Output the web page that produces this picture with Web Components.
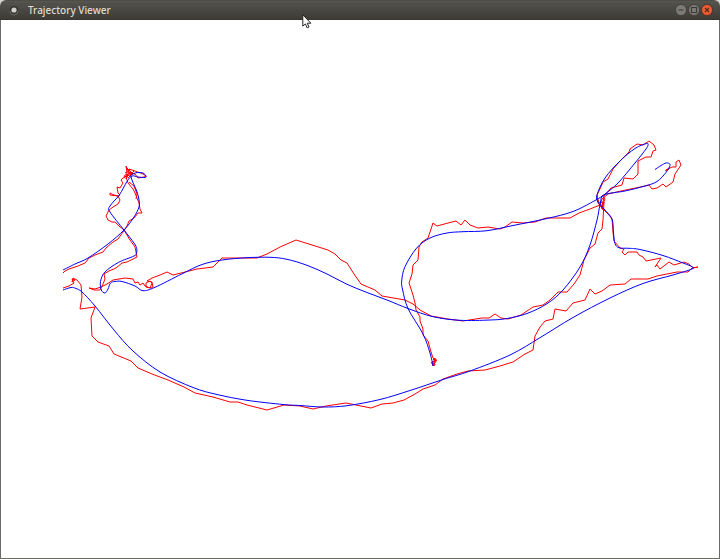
<!DOCTYPE html>
<html lang="en">
<head>
<meta charset="utf-8">
<title>Trajectory Viewer</title>
<style>
html, body { height: 100%; }
body { margin: 0; background: #d5d3d0; font-family: "Noto Sans", "Open Sans", sans-serif; overflow: hidden; }
</style>
</head>
<body>
<app-window>
  <title-bar slot="bar">Trajectory Viewer</title-bar>
  <trajectory-plot></trajectory-plot>
</app-window>
<mouse-pointer></mouse-pointer>
<script>
const define = (name, markup, setup) => customElements.define(name, class extends HTMLElement {
  constructor() {
    super();
    this.attachShadow({ mode: 'open' }).innerHTML = markup;
    if (setup) setup(this.shadowRoot);
  }
});

define('app-window', `
<style>
:host { display: flex; flex-direction: column; height: 100%; box-sizing: border-box; border-radius: 6px 6px 0 0; overflow: hidden; background: #fff; }
main { flex: 1; min-height: 0; display: flex; border: 1px solid #6b6a66; border-top: 0; }
</style>
<slot name="bar"></slot>
<main><slot></slot></main>`);

define('title-bar', `
<style>
:host { display: flex; align-items: center; height: 20px; box-sizing: border-box; padding: 0 7px 0 9px; color: #dfdbd2; background: linear-gradient(#3f3e39 0, #5b5a52 1px, #53524b 2px, #3d3c37 19px, #33322e 20px); }
svg { display: block; }
h1 { flex: 1; margin: 0 0 0 9px; font-size: 10px; line-height: 20px; font-weight: 500; }
div { display: flex; gap: 1px; }
button { width: 12px; height: 12px; padding: 0; border: 0; background: none; }
</style>
<svg width="10" height="12" viewBox="0 0 10 12"><circle cx="5" cy="6" r="4" fill="#34332f"/><path d="M1 7a4 4 0 0 0 8 0" fill="none" stroke="#68675f" stroke-width="1"/><circle cx="5" cy="6" r="2.6" fill="#d3d1cb"/></svg>
<h1><slot></slot></h1>
<div>
<button aria-label="Minimize"><svg width="12" height="12" viewBox="0 0 12 12"><circle cx="6" cy="6" r="5.5" fill="#7d7b73" stroke="#393833" stroke-width=".7"/><path d="M3.5 6h5" stroke="#3c3b37" stroke-width="1.2"/></svg></button>
<button aria-label="Maximize"><svg width="12" height="12" viewBox="0 0 12 12"><circle cx="6" cy="6" r="5.5" fill="#7d7b73" stroke="#393833" stroke-width=".7"/><path d="M3.5 3.5h5v5h-5z" fill="none" stroke="#3c3b37" stroke-width="1.1"/></svg></button>
<button aria-label="Close"><svg width="12" height="12" viewBox="0 0 12 12"><circle cx="6" cy="6" r="5.5" fill="#ed5d32" stroke="#45271f" stroke-width=".7"/><path d="M4 4l4 4M8 4L4 8" stroke="#4d2a1e" stroke-width="1.1"/></svg></button>
</div>`);

define('mouse-pointer', `
<style>
:host { position: absolute; left: 302px; top: 14px; pointer-events: none; }
svg { display: block; }
</style>
<svg width="10" height="15" viewBox="0 0 10 15"><path d="M.8.8v11.4l2.6-2.3 1.7 3.9 1.9-.8-1.7-3.8h3.6z" fill="#fff" stroke="#24231f" stroke-width="1"/></svg>`);

/* Estimated paths, drawn as smooth curves. */
const SMOOTH = [
  `63,270 75,264 88,258 108,244 124,230 134,217 139,207 139,200 136.7,191 131,177 134,173.5 138,172.5 143,173 146,176 145,177.5 138,177 132,176 127,181.5 119.3,195 110,206 110,212 124,230 134,243 136.7,248.5 136.5,253 134,256 118.3,262.5 105,272 100.5,281.5 101.3,290 105,293 108,289 110.5,283 115,281.5 122,281.5 135,286 143,290.7 155,287.3 181.7,274 202,264.5 222,260 247,257.7 270,257.3 287,259.3 307,265.3 327,274 347,284.3 367,292.5 387,300 408,308.5 433,316.7 460,320.3 490,320 507,318.5 527,313.5 547,303.7 563,290 580,267 590,245 597,220 600,205 604,195 625,191 645,186 657,181.5 666,172.5 670,165.5 669,163.5 666,163 661,165.5 655,169.5`,
  `433,366 430,353 423,334 408,308.5 402.7,290 401.7,281 405,266.7 416.7,248 430,238 447,233 463,231.7 487,230.7 513,225.5 547,218.5 573,211.5 595,200.5 605,194 618,183 635,163 646,149 648,145 646.5,143.5 635,148.5 620,161 605,178 597,195 598,202 604,209 612,219 613.5,233 615,243.5 619,247.8 629,248.3 640,249.5 663,255.5 683,263 692,266.7 692,269 673,275 643,283.5 610,298 573,317.5 540,337.7 510,355 470,371 443,379.5 410,390.5 380,399.5 347,405.7 323,407 300,405.5 283,404.5 247,400.3 217,394.5 193,387.5 160,372 133,351 114,330 95,306 82,292 76,288.5 71,287.5 63,290`
];

/* Measured paths, drawn point to point. */
const ROUGH = [
  `63,273 65,271 69,269 78,266 85,263 89,258 95,255 103,252 106,248 113,242 118,239 123,232 127,226 129,221 134,218 138,213 142,213 140,209 139,203 135,193 133,189 128,183 126,177 127,173 126,166 129,173 135,174 138,178 144,177 146,176 143,174 135,171 129,169 131,173 128,174 126,179 128,175 123,178 121,180 123,183 120,188 117,187 118,193 120,195 118,196 114,195 110,193 110,195 118,196 120,200 118,204 113,207 109,210 106,216 108,220 112,222 115,222 119,226 124,230 130,240 135,247 137,257 131,260 127,262 122,263 116,268 109,271 104,274 105,279 103,284 100,290 94,290 89,288 95,289 101,287 107,284 113,280 119,279 125,278 133,279 135,283 138,282 140,285 143,283 145,286 150,288 152,283 150,281 146,283 146,287 151,288 153,287 152,282 147,281 152,278 160,275 167,272 173,275 185,272 197,269 213,267 222,258 234,258 257,258 267,254 280,247 296,240 312,245 328,250 335,254 341,260 347,263 354,274 361,284 375,290 382,296 405,300 413,304 420,310 431,316 448,319 463,321 482,318 489,318 495,314 501,318 508,319 521,315 533,307 543,305 550,300 558,292 567,292 574,284 580,275 584,260 590,248 595,244 598,233 602,229 603,220 604,202 602,209 604,196 611,188 622,185 624,178 633,179 638,174 638,161 646,157 651,157 653,151 656,150 654,145 649,141 643,145 637,144 630,149 629,152 620,161 613,169 608,179 603,182 599,191 597,195 598,203 602,208 609,215 612,219 613,232 614,241 620,248 624,249 622,252 625,255 628,252 637,252 639,255 643,257 646,261 661,258 655,267 657,265 660,269 669,262 674,265 684,262 689,264 693,268 698,267 692,268 688,272 677,272 657,276 648,279 631,279 625,284 610,285 602,291 595,294 590,289 585,300 573,303 566,311 555,309 553,319 545,321 540,327 535,336 533,350 525,354 513,362 500,366 485,370 468,371 457,374 443,379 435,385 423,389 415,394 404,400 393,403 382,404 371,408 346,403 326,406 313,409 300,406 284,405 267,410 247,405 238,402 230,402 213,397 195,393 184,387 168,380 152,374 138,368 131,361 114,354 109,346 98,342 92,336 91,318 95,307 80,309 82,297 81,285 77,280 73,278 72,282 75,280 72,279 74,283 69,286 63,288`,
  `433,363 431,363 435,361 437,360 434,361 434,366 432,362 435,360 433,358 431,352 428,341 423,335 423,329 420,321 420,317 416,310 415,303 413,295 409,283 412,274 413,265 418,260 419,247 422,242 428,238 433,223 437,226 448,223 456,221 461,225 465,220 470,225 478,228 488,227 500,229 505,227 512,222 523,223 535,222 546,218 557,218 570,218 579,213 590,209 600,205 602,199 608,194 621,191 645,186 649,185 652,189 657,188 663,184 666,187 673,182 675,174 681,165 679,160 676,162 676,167 672,167 666,170 670,168 665,171`,
  `597,196 599,203 603,202 601,207 603,210 M602,195 605,199 603,204`,
  `125,173 129,171 127,168 132,173 125,175 124,177 130,175 134,171 M128,178 133,173 128,172 M129,182 134,186 137,194 136,199`,
  `433,360 435,358 436,362 432,365 435,365 434,362 436,360`
];

const parse = s => s.trim().split(/\s+/).map(p => p.split(',').map(Number));

/* Catmull-Rom spline written as cubic Bezier segments. */
const spline = p => p.slice(1).reduce((d, b, i) => {
  const a = p[i], before = p[i - 1] || a, after = p[i + 2] || b;
  const c1 = [a[0] + (b[0] - before[0]) / 6, a[1] + (b[1] - before[1]) / 6];
  const c2 = [b[0] - (after[0] - a[0]) / 6, b[1] - (after[1] - a[1]) / 6];
  return `${d}C${c1} ${c2} ${b}`;
}, `M${p[0]}`);

define('trajectory-plot', `
<style>
:host { display: flex; flex: 1; min-width: 0; }
svg { display: block; width: 100%; height: 100%; }
path { fill: none; stroke-width: 1; stroke-linejoin: round; }
.rough { stroke: #ff0000; }
.smooth { stroke: #0000ff; }
</style>
<svg viewBox="1 20 718 538" role="img" aria-label="Measured and estimated trajectories"></svg>`, root => {
  root.querySelector('svg').innerHTML =
    ROUGH.map(s => `<path class="rough" d="M${s}"/>`).join('') +
    SMOOTH.map(s => `<path class="smooth" d="${spline(parse(s))}"/>`).join('');
});
</script>
</body>
</html>
